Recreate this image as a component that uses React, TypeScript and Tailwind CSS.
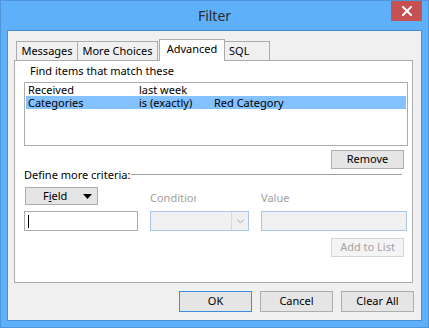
import React from "react";

const tabs = [
  { label: "Messages", w: "w-[62px]" },
  { label: "More Choices", w: "w-[81px]" },
];

const Btn = ({
  label,
  focused,
  disabled,
}: {
  label: string;
  focused?: boolean;
  disabled?: boolean;
}) => (
  <div
    className={`w-[73px] h-full flex items-center justify-center border ${
      disabled
        ? "border-[#d5d5d5] bg-[#f4f4f4] text-[#a3a3a3]"
        : focused
        ? "border-[#3c8fe0] bg-[#e5e5e5] text-black"
        : "border-[#adadad] bg-[#e5e5e5] text-black"
    }`}
  >
    {label}
  </div>
);

export default function App() {
  return (
    <div className="w-[429px] h-[328px] border border-[#4f95d9] bg-[#5fb0fa] flex flex-col font-['Noto_Sans',sans-serif] text-[11px] text-black select-none">
      {/* title bar */}
      <div className="h-[29px] flex items-start">
        <div className="w-[37px]" />
        <div className="flex-1 text-center text-[14px] leading-[30px] text-[#2b2b2b]">
          Filter
        </div>
        <div className="w-[31px] h-[20px] mr-[6px] bg-[#c75050] flex items-center justify-center">
          <svg width="10" height="10" viewBox="0 0 10 10">
            <path
              d="M1 1 L9 9 M9 1 L1 9"
              stroke="white"
              strokeWidth="2"
              strokeLinecap="square"
            />
          </svg>
        </div>
      </div>

      {/* client area */}
      <div className="mx-[6px] h-[291px] border border-[#4a8fd6] bg-[#f0f0f0] flex flex-col">
        <div className="pt-[8px] pl-[6px] pr-[8px]">
          {/* tabs */}
          <div className="h-[21px] flex items-end pl-[2px]">
            {tabs.map((t, i) => (
              <div
                key={t.label}
                className={`${t.w} h-[19px] border border-b-0 border-[#acacac] bg-[#f0f0f0] flex items-center justify-center leading-none pb-[1px] ${
                  i > 0 ? "-ml-[1px]" : ""
                }`}
              >
                {t.label}
              </div>
            ))}
            <div className="w-[66px] h-[22px] ml-[1px] -mb-[1px] relative z-10 border border-b-0 border-[#acacac] bg-white flex items-center justify-center leading-none pb-[4px]">
              Advanced
            </div>
            <div className="w-[45px] h-[19px] border border-b-0 border-l-0 border-[#acacac] bg-[#f0f0f0] flex items-center pl-[4px] leading-none pb-[1px]">
              SQL
            </div>
          </div>

          {/* panel */}
          <div className="h-[223px] border border-[#acacac] bg-white flex flex-col pt-[2px]">
            <div className="h-[15px] leading-[15px] pl-[15px]">
              Find items that match these
            </div>
            <div className="mt-[4px] ml-[9px] w-[384px] h-[64px] border border-[#acacac] bg-white">
              <div className="h-[13px] leading-[13px] flex pl-[3px]">
                <span className="w-[111px]">Received</span>
                <span>last week</span>
              </div>
              <div className="h-[13px] leading-[13px] flex mx-[1px] pl-[2px] bg-[#84c1ff]">
                <span className="w-[111px]">Categories</span>
                <span className="w-[75px]">is (exactly)</span>
                <span>Red Category</span>
              </div>
            </div>

            <div className="mt-[4px] h-[19px] self-end mr-[8px]">
              <Btn label="Remove" />
            </div>

            <div className="-mt-[2px] h-[15px] ml-[9px] mr-[10px] flex items-center">
              <span className="leading-[15px] whitespace-nowrap">
                Define more criteria:
              </span>
              <div className="flex-1 h-[1px] bg-[#a0a0a0] ml-[1px]" />
            </div>

            {/* criteria grid */}
            <div className="mt-[5px] ml-[9px] grid grid-cols-[114px_99px_146px] gap-x-[12px] gap-y-[6px]">
              <div className="w-[73px] h-[18px] ml-[1px] border border-[#adadad] bg-[#e5e5e5] flex items-center">
                <span className="ml-[17px]">
                  F<span className="underline">i</span>eld
                </span>
                <svg
                  className="ml-[16px]"
                  width="9"
                  height="5"
                  viewBox="0 0 9 5"
                >
                  <path d="M0 0 H9 L4.5 5 Z" fill="black" />
                </svg>
              </div>
              <div className="flex items-end">
                <span className="w-[46px] overflow-hidden whitespace-nowrap leading-[15px] text-[#a0a0a0]">
                  Condition
                </span>
              </div>
              <div className="flex items-end">
                <span className="leading-[15px] text-[#a0a0a0]">Value</span>
              </div>

              <div className="h-[20px] border border-[#abadb3] bg-white flex items-center pl-[3px]">
                <div className="w-[1px] h-[13px] bg-black" />
              </div>
              <div className="h-[20px] border border-[#a9c6e8] bg-[#f0f0f0] flex justify-end">
                <div className="w-[17px] h-full border-l border-[#dadada] flex items-center justify-center">
                  <svg width="7" height="5" viewBox="0 0 7 5">
                    <path
                      d="M0.5 0.5 L3.5 4 L6.5 0.5"
                      stroke="#a8a8a8"
                      strokeWidth="1"
                      fill="none"
                    />
                  </svg>
                </div>
              </div>
              <div className="h-[20px] border border-[#a9c6e8] bg-[#f0f0f0]" />
            </div>

            <div className="mt-[7px] h-[19px] self-end mr-[8px]">
              <Btn label="Add to List" disabled />
            </div>
          </div>
        </div>

        {/* bottom buttons */}
        <div className="mt-[8px] h-[21px] flex justify-end gap-[8px] pr-[7px]">
          <Btn label="OK" focused />
          <Btn label="Cancel" />
          <Btn label="Clear All" />
        </div>
      </div>
    </div>
  );
}
